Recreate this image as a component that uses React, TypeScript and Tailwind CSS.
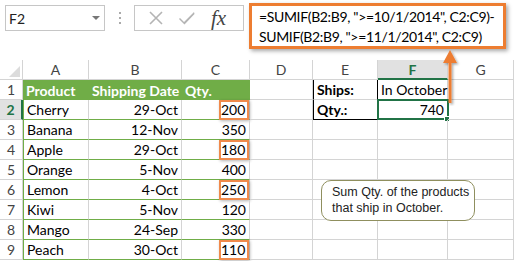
import React from "react";

// Spreadsheet data: columns A..G, rows 1..9
const cols = ["A", "B", "C", "D", "E", "F", "G"];

const data: string[][] = [
  ["Product", "Shipping Date", "Qty.", "", "Ships:", "In October", ""],
  ["Cherry", "29-Oct", "200", "", "Qty.:", "740", ""],
  ["Banana", "12-Nov", "350", "", "", "", ""],
  ["Apple", "29-Oct", "180", "", "", "", ""],
  ["Orange", "5-Nov", "400", "", "", "", ""],
  ["Lemon", "4-Oct", "250", "", "", "", ""],
  ["Kiwi", "5-Nov", "120", "", "", "", ""],
  ["Mango", "24-Sep", "330", "", "", "", ""],
  ["Peach", "30-Oct", "110", "", "", "", ""],
];

// rows whose Qty. is framed in orange
const marked = [2, 4, 6, 9];

function Cell({ row, col, value }: { row: number; col: number; value: string }) {
  const inTable = col <= 2;
  const header = row === 1 && inTable;
  const right = (!header && (col === 1 || col === 2)) || (col === 5 && row === 2);

  let cls = "relative flex items-center h-5 px-[3px] whitespace-nowrap border-b border-r border-[#d4d4d4]";
  if (header) cls = "relative flex items-center h-5 px-[3px] whitespace-nowrap bg-[#70ad47] text-white font-bold border-r border-[#70ad47]";
  else if (inTable) cls = "relative flex items-center h-5 px-[3px] whitespace-nowrap border-b border-b-[#70ad47] border-r border-r-[#d4d4d4]";
  if (col === 0 && !header) cls += " border-l border-l-[#70ad47]";
  if (col === 2 && !header) cls += " border-r-[#70ad47]";
  if (col === 4 && row <= 2) cls += " border-l border-l-black border-r-black font-bold";
  if (col === 4 && row === 2) cls += " border-b-black";
  if (right) cls += " justify-end";

  if (col === 2 && marked.includes(row)) {
    return (
      <div className={cls + " justify-end pr-0"}>
        <span className="h-5 w-[30px] border-2 border-[#f08a4b] bg-white text-right pr-[2px] leading-[16px] shadow-[1px_1px_3px_rgba(0,0,0,0.3)]">
          {value}
        </span>
      </div>
    );
  }

  return (
    <div className={cls}>
      {value}
      {col === 5 && row === 2 && (
        <>
          <div className="absolute -left-px -top-px w-[72px] h-[21px] border-2 border-[#217346]" />
          <div className="absolute -right-[3px] -bottom-[3px] w-[6px] h-[6px] bg-[#217346] border border-white" />
        </>
      )}
    </div>
  );
}

export default function App() {
  return (
    <div
      className="relative w-[514px] h-[261px] overflow-hidden bg-white text-[14px] text-black"
      style={{ fontFamily: "Lato, 'Liberation Sans', sans-serif" }}
    >
      {/* Barra formuły */}
      <div className="flex items-start h-[60px]">
        <div className="mt-[5px] ml-[5px] w-[100px] h-[26px] border border-[#c6c6c6] flex items-center justify-between pl-[3px] pr-[4px] text-[14px] text-[#222]">
          <span>F2</span>
          <span className="w-0 h-0 border-l-[4px] border-r-[4px] border-t-[4px] border-l-transparent border-r-transparent border-t-[#777]" />
        </div>
        <div className="mt-[12px] ml-[14px] flex flex-col gap-[3px]">
          <span className="w-[2px] h-[2px] bg-[#aaa]" />
          <span className="w-[2px] h-[2px] bg-[#aaa]" />
          <span className="w-[2px] h-[2px] bg-[#aaa]" />
        </div>
        <div className="mt-[5px] ml-[13px] w-[110px] h-[26px] border border-[#c6c6c6] flex items-center pl-[14px] gap-[16px]">
          <svg width="14" height="14" viewBox="0 0 14 14">
            <path d="M1 1 L13 13 M13 1 L1 13" stroke="#b4b4b4" strokeWidth="1.6" fill="none" />
          </svg>
          <svg width="16" height="14" viewBox="0 0 16 14">
            <path d="M1 7 L5 11 L15 1 L15.5 3 L5.5 13.5 L0 8 Z" fill="#b4b4b4" />
          </svg>
          <span
            className="italic text-[21px] text-[#444] leading-none"
            style={{ fontFamily: "'Liberation Serif', serif" }}
          >
            fx
          </span>
        </div>
        <div className="mt-[3px] ml-[5px] w-[257px] h-[46px] border-[3px] border-[#ed7d31] pl-[7px] pt-[1px] leading-[20px] whitespace-nowrap tracking-[-0.35px] shadow-[2px_2px_4px_rgba(0,0,0,0.35)]">
          <div>=SUMIF(B2:B9, "&gt;=10/1/2014", C2:C9)-</div>
          <div>SUMIF(B2:B9, "&gt;=11/1/2014", C2:C9)</div>
        </div>
      </div>

      {/* Arkusz */}
      <div className="grid grid-cols-[23px_66px_93px_68px_63px_65px_70px_66px]">
        <div className="relative h-5 border-b border-r border-[#d4d4d4]">
          <svg className="absolute right-[2px] bottom-[2px]" width="11" height="11" viewBox="0 0 11 11">
            <path d="M11 0 L11 11 L0 11 Z" fill="#dcdcdc" />
          </svg>
        </div>
        {cols.map((c) =>
          c === "F" ? (
            <div
              key={c}
              className="h-5 flex items-center justify-center bg-[#e1e1e1] border-r border-[#d4d4d4] border-b-2 border-b-[#217346] font-bold text-[#217346] text-[14px]"
            >
              {c}
            </div>
          ) : (
            <div
              key={c}
              className="h-5 flex items-center justify-center border-b border-r border-[#d4d4d4] text-[#444] text-[14px]"
            >
              {c}
            </div>
          )
        )}
        {data.map((r, i) => {
          const row = i + 1;
          return (
            <React.Fragment key={row}>
              {row === 2 ? (
                <div className="h-5 flex items-center justify-center bg-[#e1e1e1] border-b border-[#d4d4d4] border-r-2 border-r-[#217346] font-bold text-[#217346] text-[14px]">
                  {row}
                </div>
              ) : (
                <div className="h-5 flex items-center justify-center border-b border-r border-[#d4d4d4] text-[#444] text-[14px]">
                  {row}
                </div>
              )}
              {r.map((v, c) => (
                <Cell key={c} row={row} col={c} value={v} />
              ))}
            </React.Fragment>
          );
        })}
      </div>

      {/* Strzałka */}
      <svg className="absolute left-[441px] top-[48px]" width="20" height="58" viewBox="0 0 20 58">
        <defs>
          <filter id="sh" x="-50%" y="-10%" width="200%" height="130%">
            <feDropShadow dx="1.5" dy="1.5" stdDeviation="1.2" floodColor="#000" floodOpacity="0.35" />
          </filter>
        </defs>
        <g filter="url(#sh)">
          <path d="M9 2 L16 15 L2 15 Z" fill="#ed7d31" />
          <rect x="7.5" y="14" width="3" height="41" fill="#ed7d31" />
        </g>
      </svg>

      {/* Dymek */}
      <div
        className="absolute left-[321px] top-[180px] w-[154px] h-[41px] rounded-[10px] border border-[#8f8f5e] bg-white pl-[10px] pt-[3px] text-[12.5px] leading-[16px] whitespace-nowrap text-[#222]"
        style={{ fontFamily: "'Liberation Sans', sans-serif" }}
      >
        Sum Qty. of the products
        <br />
        that ship in October.
      </div>
    </div>
  );
}
